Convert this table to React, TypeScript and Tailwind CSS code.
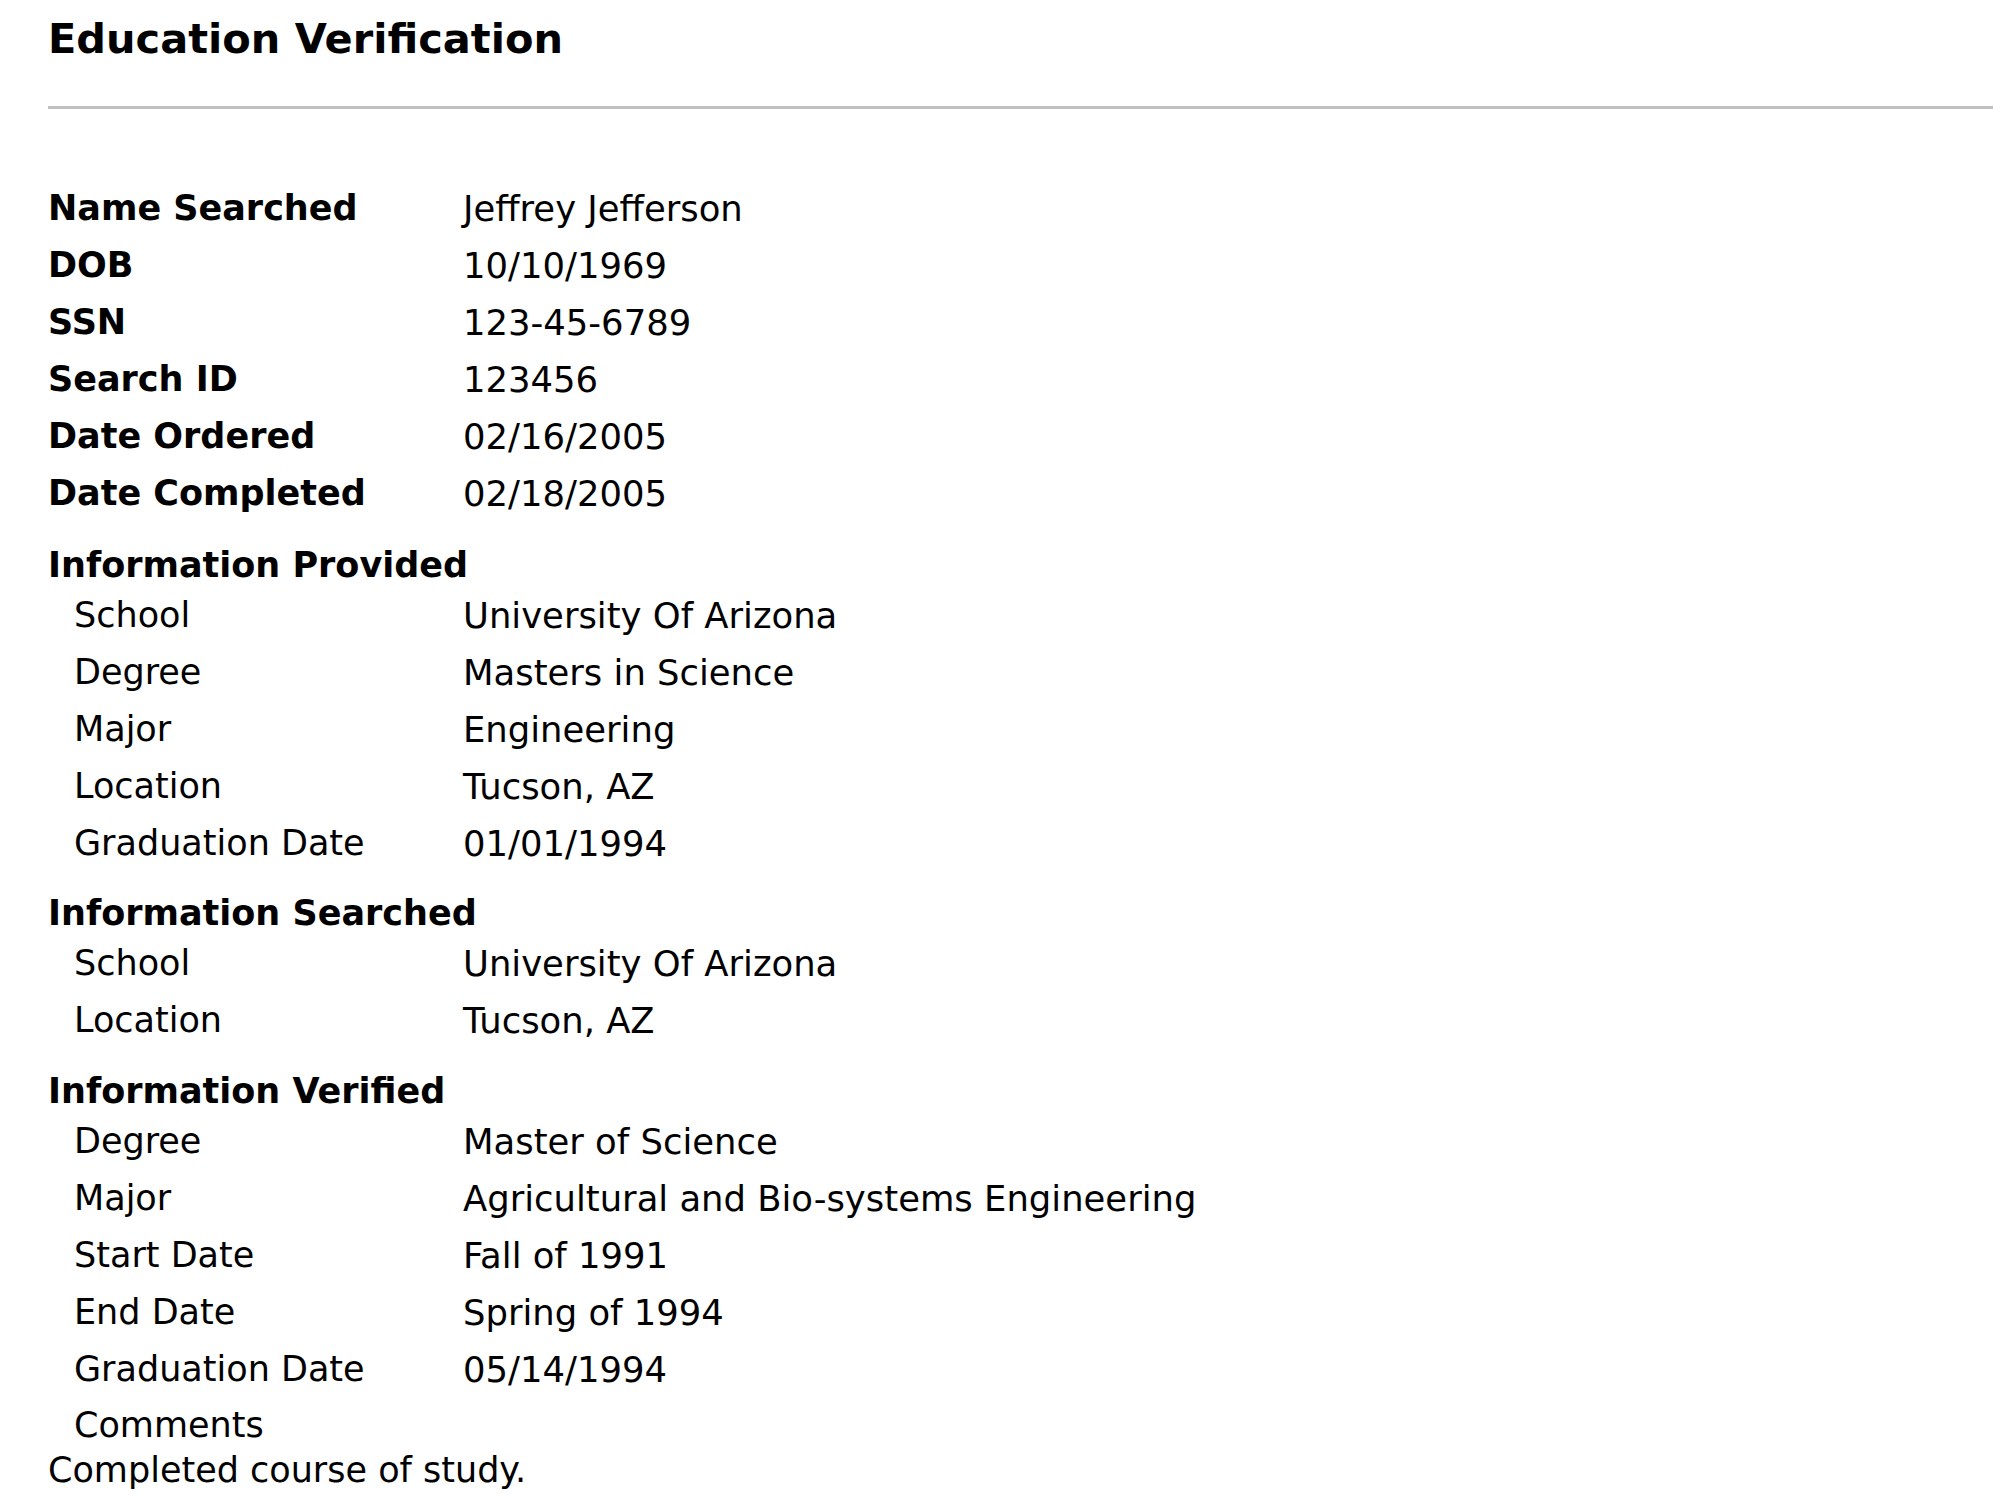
const summary: [string, string][] = [
  ["Name Searched", "Jeffrey Jefferson"],
  ["DOB", "10/10/1969"],
  ["SSN", "123-45-6789"],
  ["Search ID", "123456"],
  ["Date Ordered", "02/16/2005"],
  ["Date Completed", "02/18/2005"],
];

const provided: [string, string][] = [
  ["School", "University Of Arizona"],
  ["Degree", "Masters in Science"],
  ["Major", "Engineering"],
  ["Location", "Tucson, AZ"],
  ["Graduation Date", "01/01/1994"],
];

const searched: [string, string][] = [
  ["School", "University Of Arizona"],
  ["Location", "Tucson, AZ"],
];

const verified: [string, string][] = [
  ["Degree", "Master of Science"],
  ["Major", "Agricultural and Bio-systems Engineering"],
  ["Start Date", "Fall of 1991"],
  ["End Date", "Spring of 1994"],
  ["Graduation Date", "05/14/1994"],
];

function Row({ label, value, bold }: { label: string; value: string; bold?: boolean }) {
  return (
    <div className="grid h-[57px] grid-cols-[415px_1fr] leading-[57px] whitespace-nowrap">
      <span className={bold ? "font-bold" : "pl-[26px]"}>{label}</span>
      <span className="text-[35.4px]">{value}</span>
    </div>
  );
}

function Section({ title, rows, gap }: { title: string; rows: [string, string][]; gap: string }) {
  return (
    <div>
      <h2 className={`${gap} h-[43px] font-bold leading-[43px]`}>{title}</h2>
      {rows.map(([l, v]) => (
        <Row key={title + l} label={l} value={v} />
      ))}
    </div>
  );
}

export default function App() {
  return (
    <div className="min-h-screen bg-white pl-12 pt-[15px] text-[35px] text-black [font-family:'DejaVu_Sans',Verdana,sans-serif]">
      <h1 className="h-[48px] text-[41.5px] font-bold leading-[48px]">Education Verification</h1>
      <hr className="mt-[43px] border-0 border-t-[3px] border-[#c0c0c0]" />

      <div className="mt-[71px]">
        {summary.map(([l, v]) => (
          <Row key={l} label={l} value={v} bold />
        ))}
      </div>

      <Section title="Information Provided" rows={provided} gap="mt-[22px]" />
      <Section title="Information Searched" rows={searched} gap="mt-[20px]" />
      <Section title="Information Verified" rows={verified} gap="mt-[21px]" />

      <div className="h-[54px] pl-[26px] leading-[54px]">Comments</div>
      <p className="h-[36px] leading-[36px]">Completed course of study.</p>
    </div>
  );
}
